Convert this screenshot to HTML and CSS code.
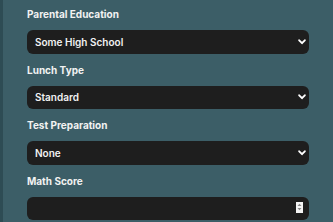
FILE: index.html
```html
<!DOCTYPE html>
<html lang="en">
<head>
  <meta charset="UTF-8" />
  <meta name="viewport" content="width=device-width, initial-scale=1.0"/>
  <title>Student Score Form</title>
  <link rel="stylesheet" href="styles.css">
</head>
<body>

<main class="panel">
  <div class="field">
    <label for="parentEdu">Parental Education</label>
    <select id="parentEdu">
      <option>Some High School</option>
      <option>High School</option>
      <option>Some College</option>
      <option>Associate's Degree</option>
      <option>Bachelor's Degree</option>
      <option>Master's Degree</option>
    </select>
  </div>

  <div class="field">
    <label for="lunch">Lunch Type</label>
    <select id="lunch">
      <option>Standard</option>
      <option>Free/Reduced</option>
    </select>
  </div>

  <div class="field">
    <label for="prep">Test Preparation</label>
    <select id="prep">
      <option>None</option>
      <option>Completed</option>
    </select>
  </div>

  <div class="field">
    <label for="math">Math Score</label>
    <div class="number-wrap">
      <input type="number" id="math" min="0" max="100" />
      <span class="spinner">
        <svg width="7" height="10" viewBox="0 0 7 10">
          <path d="M1.5 4 L3.5 1.8 L5.5 4 Z" fill="#888"/>
          <path d="M1.5 6 L3.5 8.2 L5.5 6 Z" fill="#888"/>
        </svg>
      </span>
    </div>
  </div>
</main>

</body>
</html>
```

FILE: styles.css
```css
html, body {
  margin: 0;
  height: 100%;
}

body {
  background: #3c5e67;
  font-family: "Inter", "Open Sans", sans-serif;
  color: #f2f2f2;
}

.panel {
  border-left: 3px solid #2e4c54;
  min-height: 100%;
  box-sizing: border-box;
  padding: 6px 24px 0 24px;
}

.field {
  display: flex;
  flex-direction: column;
  margin-bottom: 8px;
}

.field label {
  font-size: 10px;
  font-weight: 700;
  line-height: 16px;
  margin-bottom: 8px;
}

.field select,
.field input {
  height: 23.5px;
  width: 100%;
  box-sizing: border-box;
  border: none;
  border-radius: 6px;
  background: #1e1e1e;
  color: #f2f2f2;
  font-family: inherit;
  font-size: 10px;
  font-weight: 600;
  padding: 0 8px;
  outline: none;
}

.field select {
  appearance: none;
  background-image: url("data:image/svg+xml;utf8,<svg xmlns='http://www.w3.org/2000/svg' width='8' height='6' viewBox='0 0 8 6'><path d='M1.2 1.3 L4 4.2 L6.8 1.3' fill='none' stroke='white' stroke-width='1.9' stroke-linecap='round' stroke-linejoin='round'/></svg>");
  background-repeat: no-repeat;
  background-position: right 3px center;
}

.number-wrap {
  position: relative;
}

.field input::-webkit-inner-spin-button,
.field input::-webkit-outer-spin-button {
  -webkit-appearance: none;
  margin: 0;
}

.spinner {
  position: absolute;
  right: 6px;
  top: 5.5px;
  width: 7px;
  height: 10.5px;
  background: #f4f4f4;
  display: flex;
  align-items: center;
  justify-content: center;
}
```
